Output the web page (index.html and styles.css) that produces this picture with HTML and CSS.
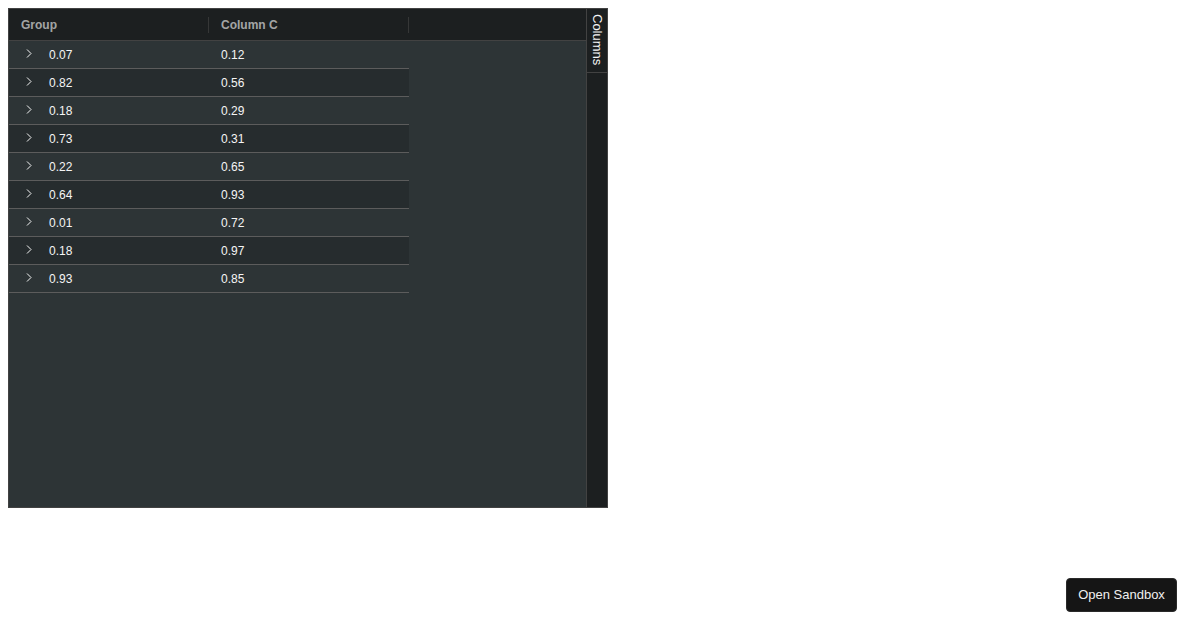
FILE: index.html
```html
<!DOCTYPE html>
<html>
<head>
<meta charset="utf-8">
<link rel="stylesheet" href="styles.css">
</head>
<body>
<div class="grid">
  <div class="main">
    <div class="header">
      <div class="hcell">Group<span class="sep"></span></div>
      <div class="hcell">Column C<span class="sep"></span></div>
    </div>
    <div class="body">
      <div class="row"><div class="cell group"><svg class="chev" width="6" height="9" viewBox="0 0 6 9"><path d="M1 0.5 L5 4.5 L1 8.5" fill="none" stroke="#f5f5f5" stroke-width="1"/></svg><span>0.07</span></div><div class="cell">0.12</div></div>
      <div class="row odd"><div class="cell group"><svg class="chev" width="6" height="9" viewBox="0 0 6 9"><path d="M1 0.5 L5 4.5 L1 8.5" fill="none" stroke="#f5f5f5" stroke-width="1"/></svg><span>0.82</span></div><div class="cell">0.56</div></div>
      <div class="row"><div class="cell group"><svg class="chev" width="6" height="9" viewBox="0 0 6 9"><path d="M1 0.5 L5 4.5 L1 8.5" fill="none" stroke="#f5f5f5" stroke-width="1"/></svg><span>0.18</span></div><div class="cell">0.29</div></div>
      <div class="row odd"><div class="cell group"><svg class="chev" width="6" height="9" viewBox="0 0 6 9"><path d="M1 0.5 L5 4.5 L1 8.5" fill="none" stroke="#f5f5f5" stroke-width="1"/></svg><span>0.73</span></div><div class="cell">0.31</div></div>
      <div class="row"><div class="cell group"><svg class="chev" width="6" height="9" viewBox="0 0 6 9"><path d="M1 0.5 L5 4.5 L1 8.5" fill="none" stroke="#f5f5f5" stroke-width="1"/></svg><span>0.22</span></div><div class="cell">0.65</div></div>
      <div class="row odd"><div class="cell group"><svg class="chev" width="6" height="9" viewBox="0 0 6 9"><path d="M1 0.5 L5 4.5 L1 8.5" fill="none" stroke="#f5f5f5" stroke-width="1"/></svg><span>0.64</span></div><div class="cell">0.93</div></div>
      <div class="row"><div class="cell group"><svg class="chev" width="6" height="9" viewBox="0 0 6 9"><path d="M1 0.5 L5 4.5 L1 8.5" fill="none" stroke="#f5f5f5" stroke-width="1"/></svg><span>0.01</span></div><div class="cell">0.72</div></div>
      <div class="row odd"><div class="cell group"><svg class="chev" width="6" height="9" viewBox="0 0 6 9"><path d="M1 0.5 L5 4.5 L1 8.5" fill="none" stroke="#f5f5f5" stroke-width="1"/></svg><span>0.18</span></div><div class="cell">0.97</div></div>
      <div class="row"><div class="cell group"><svg class="chev" width="6" height="9" viewBox="0 0 6 9"><path d="M1 0.5 L5 4.5 L1 8.5" fill="none" stroke="#f5f5f5" stroke-width="1"/></svg><span>0.93</span></div><div class="cell">0.85</div></div>
    </div>
  </div>
  <div class="side">
    <div class="tab">Columns</div>
  </div>
</div>
<button class="sandbox">Open Sandbox</button>
</body>
</html>
```

FILE: styles.css
```css
html, body {
  margin: 0;
  padding: 0;
  background: #fff;
}
body {
  padding: 8px;
  height: 630px;
  box-sizing: border-box;
  position: relative;
  font-family: "Liberation Sans", Arial, sans-serif;
}
.grid {
  width: 600px;
  height: 500px;
  box-sizing: border-box;
  border: 1px solid #424242;
  background: #2d3436;
  display: flex;
  color: #f5f5f5;
  font-size: 12px;
}
.main {
  flex: 1;
  display: flex;
  flex-direction: column;
  min-width: 0;
}
.header {
  height: 32px;
  box-sizing: border-box;
  background: #1c1f20;
  border-bottom: 1px solid #424242;
  display: flex;
}
.hcell {
  width: 200px;
  box-sizing: border-box;
  padding-left: 12px;
  display: flex;
  align-items: center;
  font-weight: bold;
  color: rgba(245, 245, 245, 0.64);
  position: relative;
}
.sep {
  position: absolute;
  right: 0;
  top: 8px;
  width: 1px;
  height: 16px;
  background: rgba(66, 66, 66, 0.7);
}
.body {
  display: flex;
  flex-direction: column;
}
.row {
  width: 400px;
  height: 28px;
  box-sizing: border-box;
  border-bottom: 1px solid #5c5c5c;
  display: flex;
  background: #2d3436;
}
.row.odd {
  background: #262c2e;
}
.cell {
  width: 200px;
  box-sizing: border-box;
  padding-left: 12px;
  display: flex;
  align-items: center;
  padding-top: 1px;
}
.group {
  padding-left: 17px;
}
.chev {
  margin-right: 17px;
  margin-top: -4px;
}
.side {
  width: 21px;
  box-sizing: border-box;
  border-left: 1px solid #424242;
  background: #1c1f20;
}
.tab {
  writing-mode: vertical-rl;
  height: 64px;
  box-sizing: border-box;
  border-bottom: 1px solid #424242;
  padding-top: 5px;
  font-size: 13px;
  color: #f5f5f5;
  line-height: 20px;
}
.sandbox {
  position: absolute;
  left: 1066px;
  top: 578px;
  width: 111px;
  height: 34px;
  background: #151515;
  color: #f0f0f0;
  border: 1px solid #2a2a2a;
  border-radius: 4px;
  font-family: "Liberation Sans", Arial, sans-serif;
  font-size: 13px;
  padding: 0 0 2px 0;
}
```
